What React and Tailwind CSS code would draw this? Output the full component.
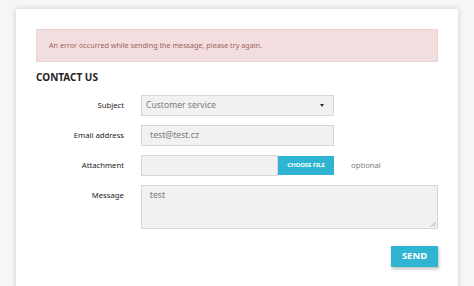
export default function App() {
  const font = { fontFamily: '"Noto Sans", "Open Sans", sans-serif' };
  return (
    <div className="w-[474px] h-[286px] overflow-hidden bg-[#f6f6f6] pt-[9px] pl-[16px]" style={font}>
      <div className="w-[442px] h-[300px] bg-white shadow-[0_0_6px_rgba(0,0,0,0.18)] px-[20px] pt-[20px]">
        {/* Alert */}
        <div className="h-[33px] bg-[#f2dede] border border-[#ebd3d3] flex items-center pl-[12px] text-[7.2px] text-[#a0615f]">
          An error occurred while sending the message, please try again.
        </div>

        <h3 className="mt-[8px] text-[10px] font-bold text-[#232323] leading-[14px]">CONTACT US</h3>

        <div className="mt-[11px] flex flex-col gap-[9px]">
          {/* Subject */}
          <div className="flex items-center">
            <label className="w-[88px] text-right text-[7.7px] text-[#232323]">Subject</label>
            <div className="ml-[17px] w-[193px] h-[21px] bg-[#f1f1f1] border border-[#d6d6d6] flex items-center justify-between pl-[4px] pr-[9px] text-[8.6px] text-[#7a7a7a]">
              <span>Customer service</span>
              <span className="w-0 h-0 border-l-[2.5px] border-r-[2.5px] border-t-[3px] border-l-transparent border-r-transparent border-t-[#333]" />
            </div>
          </div>

          {/* Email */}
          <div className="flex items-center">
            <label className="w-[88px] text-right text-[7.7px] text-[#232323]">Email address</label>
            <div className="ml-[17px] w-[193px] h-[21px] bg-[#f1f1f1] border border-[#d6d6d6] flex items-center pl-[8px] text-[8.7px] text-[#7a7a7a]">
              test@test.cz
            </div>
          </div>

          {/* Attachment */}
          <div className="flex items-center">
            <label className="w-[88px] text-right text-[7.7px] text-[#232323]">Attachment</label>
            <div className="ml-[17px] flex items-center">
              <div className="w-[137px] h-[21px] bg-[#f1f1f1] border border-[#d6d6d6]" />
              <div className="w-[56px] h-[19px] bg-[#2fb5d2] flex items-center justify-center text-[6px] font-bold text-white tracking-[-0.1px]">
                CHOOSE FILE
              </div>
            </div>
            <span className="ml-[17px] text-[7.7px] text-[#7a7a7a]">optional</span>
          </div>

          {/* Message */}
          <div className="flex items-start">
            <label className="w-[88px] text-right text-[7.7px] text-[#232323] pt-[5px]">Message</label>
            <div className="relative ml-[17px] w-[298px] h-[44px] bg-[#f1f1f1] border border-[#d6d6d6] pl-[8px] pt-[3px] text-[8.7px] text-[#7a7a7a]">
              test
              <svg className="absolute right-[1px] bottom-[1px]" width="6" height="6" viewBox="0 0 6 6">
                <path d="M5.5 1 L1 5.5 M5.5 3.5 L3.5 5.5" stroke="#999" strokeWidth="0.8" />
              </svg>
            </div>
          </div>
        </div>

        <div className="flex justify-end mt-[17px]">
          <button className="w-[47px] h-[21px] bg-[#2fb5d2] text-white text-[9.5px] font-bold shadow-[1px_2px_3px_rgba(0,0,0,0.25)]">
            SEND
          </button>
        </div>
      </div>
    </div>
  );
}
